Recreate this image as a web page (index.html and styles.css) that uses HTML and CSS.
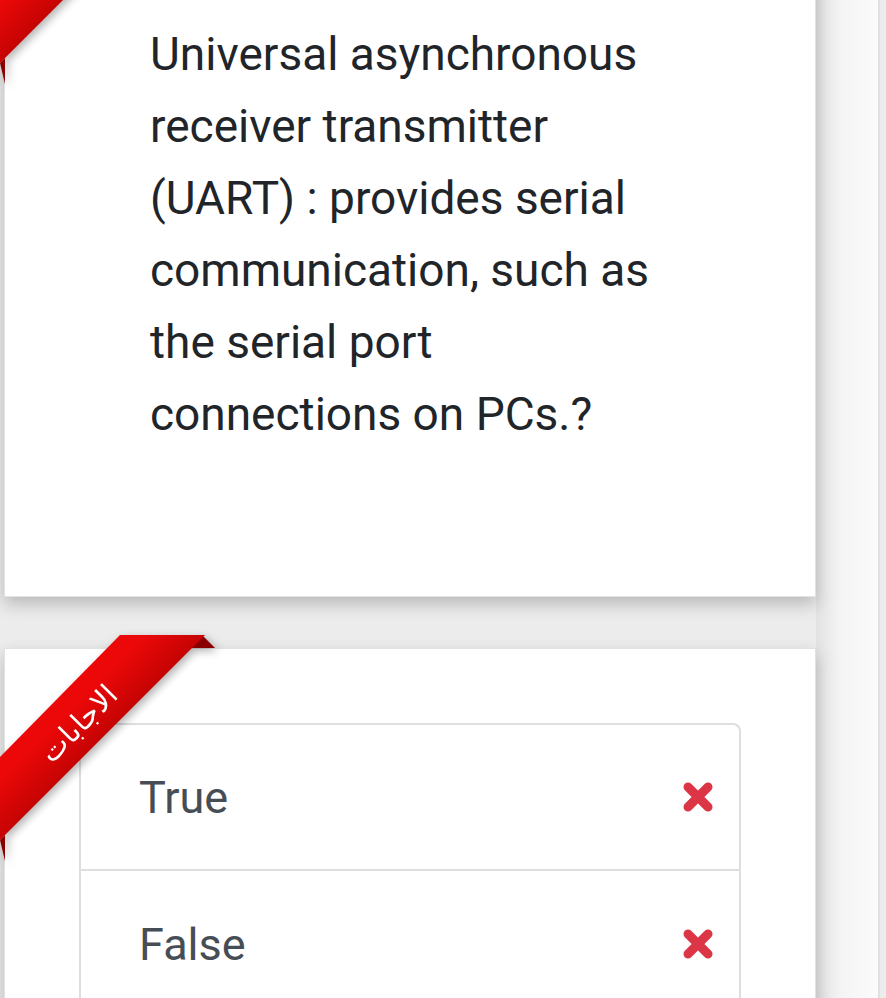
FILE: index.html
```html
<!DOCTYPE html>
<html lang="ar">
<head>
<meta charset="utf-8">
<title>Question</title>
<link rel="stylesheet" href="styles.css">
</head>
<body>
<div class="page">
  <main class="content">
    <section class="card card-question">
      <svg class="ribbon" width="216" height="240" viewBox="0 0 216 240" aria-hidden="true">
        <defs>
          <linearGradient id="rg1" x1="0" y1="0" x2="1" y2="1" gradientUnits="objectBoundingBox">
            <stop offset="0.35" stop-color="#ec0808"/>
            <stop offset="0.62" stop-color="#a60000"/>
          </linearGradient>
        </defs>
        <polygon class="fold" points="202,0 215,13 190,13"/>
        <polygon class="fold" points="0,205 5,200 5,226"/>
        <polygon class="band" fill="url(#rg1)" points="120,0 205,0 0,205 0,122"/>
      </svg>
      <p class="question">Universal asynchronous<br>receiver transmitter<br>(UART) : provides serial<br>communication, such as<br>the serial port<br>connections on PCs.?</p>
    </section>

    <section class="card card-answers">
      <svg class="ribbon" width="216" height="240" viewBox="0 0 216 240">
        <defs>
          <linearGradient id="rg2" x1="0" y1="0" x2="1" y2="1" gradientUnits="objectBoundingBox">
            <stop offset="0.35" stop-color="#ec0808"/>
            <stop offset="0.62" stop-color="#a60000"/>
          </linearGradient>
        </defs>
        <polygon class="fold" points="202,0 215,13 190,13"/>
        <polygon class="fold" points="0,205 5,200 5,226"/>
        <polygon class="band" fill="url(#rg2)" points="120,0 205,0 0,205 0,122"/>
        <text class="ribbon-text" x="80" y="90" transform="rotate(-45 80 90)" text-anchor="middle" dominant-baseline="middle">الاجابات</text>
      </svg>
      <ul class="answers">
        <li class="answer"><span class="answer-text">True</span>
          <svg class="x-icon" width="32" height="32" viewBox="0 0 32 32" aria-hidden="true"><path d="M6 6 L26 26 M26 6 L6 26"/></svg>
        </li>
        <li class="answer"><span class="answer-text">False</span>
          <svg class="x-icon" width="32" height="32" viewBox="0 0 32 32" aria-hidden="true"><path d="M6 6 L26 26 M26 6 L6 26"/></svg>
        </li>
      </ul>
    </section>
  </main>
  <div class="side"></div>
</div>
</body>
</html>
```

FILE: styles.css
```css
html, body {
  margin: 0;
  padding: 0;
}
body {
  background: #ececec;
  font-family: Roboto, "Noto Sans", "DejaVu Sans", sans-serif;
  overflow: hidden;
  height: 998px;
}
.page {
  display: flex;
  height: 998px;
}
.content {
  width: 812px;
  margin-left: 4px;
  display: flex;
  flex-direction: column;
  gap: 51px;
}
.card {
  position: relative;
  background: #fff;
  border: 1px solid #e2e2e2;
  box-sizing: border-box;
  box-shadow: 0 7px 16px rgba(0, 0, 0, 0.22);
}
.card-question {
  margin-top: -129px;
  height: 726px;
  padding: 146px 40px 0 145px;
  flex-shrink: 0;
}
.question {
  margin: 0;
  font-size: 46px;
  line-height: 72px;
  color: #212529;
  white-space: nowrap;
}
.ribbon {
  position: absolute;
  left: -5px;
  top: -14px;
  overflow: visible;
  filter: drop-shadow(3px 3px 4px rgba(0, 0, 0, 0.3));
}
.fold {
  fill: #8a0000;
}
.ribbon-text {
  fill: #fff;
  font-family: "DejaVu Sans", sans-serif;
  font-size: 29px;
}
.card-answers {
  padding: 74px 74px 0 74px;
  flex: 1;
  border-bottom: none;
}
.answers {
  list-style: none;
  margin: 0;
  padding: 0;
  border: 2px solid #dedede;
  border-bottom: none;
  border-radius: 8px 8px 0 0;
}
.answer {
  display: flex;
  align-items: center;
  justify-content: space-between;
  height: 146px;
  padding: 0 25px 0 58px;
  border-bottom: 2px solid #dedede;
  box-sizing: border-box;
}
.answer:last-child {
  border-bottom: none;
}
.answer-text {
  font-size: 45px;
  color: #474d55;
}
.x-icon path {
  stroke: #dc3545;
  stroke-width: 9;
  stroke-linecap: round;
  fill: none;
}
.side {
  width: 62px;
  background: linear-gradient(to right, #e2e2e2, #f4f4f4 40%, #fbfbfb);
  border-right: 2px solid #e0e0e0;
}
```
